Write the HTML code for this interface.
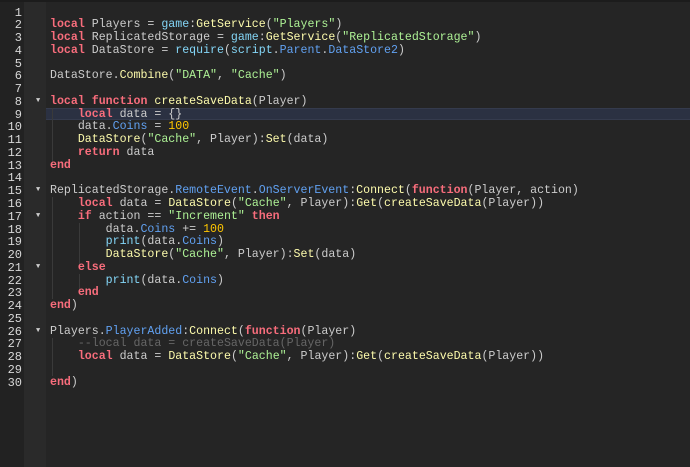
<!DOCTYPE html>
<html><head><meta charset="utf-8"><style>
html,body{margin:0;padding:0;width:690px;height:467px;overflow:hidden;background:#252525;}
body{position:relative;font-family:"Liberation Mono",monospace;font-size:11.6px;}
.g1{position:absolute;left:0;top:0;width:24px;height:467px;background:#222;}
.g2{position:absolute;left:24px;top:0;width:22px;height:467px;background:#2a2a2a;}
.top{position:absolute;left:0;top:0;width:690px;height:2px;background:#1c1c1c;}
.hl{position:absolute;left:46px;top:108px;width:644px;height:12px;background:#2b3142;border-top:1px solid #353b4d;border-bottom:1px solid #353b4d;box-sizing:border-box;}
.nums{position:absolute;left:0;top:6.5px;width:22px;text-align:right;color:#d8d8d8;line-height:12.76px;white-space:pre;font-size:12px;}
.code{position:absolute;left:50px;top:6.5px;color:#cccccc;line-height:12.76px;white-space:pre;}
.arr{position:absolute;left:36px;color:#ccc;font-size:7px;}
.k{color:#f86d7c;font-weight:bold}.b{color:#84d6f7}.s{color:#adf195}.n{color:#ffc600}.f{color:#fdfbac}.p{color:#61a1f1}.c{color:#666}
.guide{position:absolute;width:1px;background:#3a3a3a;}
</style></head><body>
<div class="g1"></div><div class="g2"></div><div class="top"></div>
<div class="hl"></div>
<div class="guide" style="left:52px;top:108px;height:57px"></div>
<div class="guide" style="left:52px;top:197px;height:102px"></div>
<div class="guide" style="left:79px;top:223px;height:41px"></div>
<div class="guide" style="left:79px;top:274px;height:15px"></div>
<div class="guide" style="left:52px;top:338px;height:38px"></div>
<div class="nums">1
2
3
4
5
6
7
8
9
10
11
12
13
14
15
16
17
18
19
20
21
22
23
24
25
26
27
28
29
30</div>
<div class="arr" style="top:97px">▼</div>
<div class="arr" style="top:186px">▼</div>
<div class="arr" style="top:212px">▼</div>
<div class="arr" style="top:263px">▼</div>
<div class="arr" style="top:327px">▼</div>
<div class="code">
<span class="k">local</span> Players = <span class="b">game</span>:<span class="f">GetService</span>(<span class="s">"Players"</span>)
<span class="k">local</span> ReplicatedStorage = <span class="b">game</span>:<span class="f">GetService</span>(<span class="s">"ReplicatedStorage"</span>)
<span class="k">local</span> DataStore = <span class="b">require</span>(<span class="b">script</span>.<span class="p">Parent</span>.<span class="p">DataStore2</span>)

DataStore.<span class="f">Combine</span>(<span class="s">"DATA"</span>, <span class="s">"Cache"</span>)

<span class="k">local function</span> <span class="f">createSaveData</span>(Player)
    <span class="k">local</span> data = {}
    data.<span class="p">Coins</span> = <span class="n">100</span>
    <span class="f">DataStore</span>(<span class="s">"Cache"</span>, Player):<span class="f">Set</span>(data)
    <span class="k">return</span> data
<span class="k">end</span>

ReplicatedStorage.<span class="p">RemoteEvent</span>.<span class="p">OnServerEvent</span>:<span class="f">Connect</span>(<span class="k">function</span>(Player, action)
    <span class="k">local</span> data = <span class="f">DataStore</span>(<span class="s">"Cache"</span>, Player):<span class="f">Get</span>(<span class="f">createSaveData</span>(Player))
    <span class="k">if</span> action == <span class="s">"Increment"</span> <span class="k">then</span>
        data.<span class="p">Coins</span> += <span class="n">100</span>
        <span class="b">print</span>(data.<span class="p">Coins</span>)
        <span class="f">DataStore</span>(<span class="s">"Cache"</span>, Player):<span class="f">Set</span>(data)
    <span class="k">else</span>
        <span class="b">print</span>(data.<span class="p">Coins</span>)
    <span class="k">end</span>
<span class="k">end</span>)

Players.<span class="p">PlayerAdded</span>:<span class="f">Connect</span>(<span class="k">function</span>(Player)
    <span class="c">--local data = createSaveData(Player)</span>
    <span class="k">local</span> data = <span class="f">DataStore</span>(<span class="s">"Cache"</span>, Player):<span class="f">Get</span>(<span class="f">createSaveData</span>(Player))

<span class="k">end</span>)</div>
</body></html>
